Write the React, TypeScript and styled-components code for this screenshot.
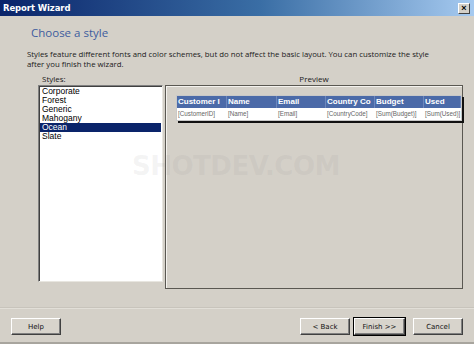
import styled, { createGlobalStyle } from 'styled-components';

const GlobalStyle = createGlobalStyle`
  html, body {
    margin: 0;
    padding: 0;
    background: #d4d0c8;
  }
  * { box-sizing: border-box; }
`;

const styles = ['Corporate', 'Forest', 'Generic', 'Mahogany', 'Ocean', 'Slate'];
const columns = [
  { head: 'Customer I', field: '[CustomerID]' },
  { head: 'Name', field: '[Name]' },
  { head: 'Email', field: '[Email]' },
  { head: 'Country Co', field: '[CountryCode]' },
  { head: 'Budget', field: '[Sum(Budget)]' },
  { head: 'Used', field: '[Sum(Used)]' },
];

const Window = styled.div`
  position: relative;
  width: 474px;
  height: 344px;
  background: #d4d0c8;
  display: flex;
  flex-direction: column;
  font-family: 'Liberation Sans', 'DejaVu Sans', sans-serif;
  overflow: hidden;
  border-bottom: 2px solid #a8a59e;
`;

const TitleBar = styled.div`
  height: 16px;
  display: flex;
  align-items: center;
  justify-content: space-between;
  padding: 0 4px 0 3px;
  background: linear-gradient(90deg, #0a246a 0%, #3a6ea5 55%, #a6caf0 100%);
`;

const TitleText = styled.span`
  color: #fff;
  font-family: 'DejaVu Sans', sans-serif;
  font-weight: bold;
  font-size: 8.5px;
  letter-spacing: -0.1px;
`;

const CloseButton = styled.div`
  width: 12px;
  height: 11px;
  background: #d4d0c8;
  border: 1px solid;
  border-color: #fff #404040 #404040 #fff;
  display: flex;
  align-items: center;
  justify-content: center;
  font-size: 9px;
  font-weight: bold;
  line-height: 1;
  color: #000;
`;

const Heading = styled.h1`
  margin: 10px 0 0 31px;
  font-family: 'Open Sans', 'Liberation Sans', sans-serif;
  font-weight: normal;
  font-size: 11.5px;
  color: #3d5c9e;
  line-height: 14px;
`;

const Description = styled.p`
  margin: 9px 30px 0 27px;
  font-family: 'Open Sans', 'Liberation Sans', sans-serif;
  font-size: 7.8px;
  line-height: 10px;
  color: #1a1a1a;
`;

const Main = styled.div`
  display: flex;
  gap: 2px;
  margin: 5px 0 0 38px;
`;

const Column = styled.div<{ $width: number }>`
  width: ${p => p.$width}px;
  display: flex;
  flex-direction: column;
`;

const Label = styled.div<{ $center?: boolean }>`
  font-family: 'Open Sans', 'Liberation Sans', sans-serif;
  font-size: 8px;
  line-height: 10px;
  height: 10px;
  color: #1a1a1a;
  padding-left: ${p => (p.$center ? 0 : 4)}px;
  text-align: ${p => (p.$center ? 'center' : 'left')};
`;

const ListBox = styled.div`
  margin-top: 1px;
  height: 197px;
  background: #fff;
  border: 1px solid;
  border-color: #808080 #e8e6e0 #e8e6e0 #808080;
  box-shadow: inset 1px 1px 0 #404040;
  padding: 1px 1px;
`;

const ListItem = styled.div<{ $selected?: boolean }>`
  height: 9px;
  line-height: 9px;
  font-size: 8.5px;
  padding-left: 2px;
  color: ${p => (p.$selected ? '#fff' : '#000')};
  background: ${p => (p.$selected ? '#0a246a' : 'transparent')};
`;

const PreviewFrame = styled.div`
  margin-top: 1px;
  height: 204px;
  border: 1px solid #5a5852;
  box-shadow: inset 1px 1px 0 #f4f2ee;
  padding: 9px 2px 0 10px;
`;

const Table = styled.div`
  display: grid;
  grid-template-columns: 50px 50px 49px 49px 49px 37px;
  width: 286px;
  border: 1px solid #c8c8c8;
  box-shadow: 2px 2px 0 #111;
  background: #fff;
`;

const HeadCell = styled.div`
  background: #4b6aa8;
  color: #fff;
  font-weight: bold;
  font-size: 8px;
  height: 12px;
  line-height: 12px;
  padding-left: 1px;
  white-space: nowrap;
  overflow: hidden;
  border-right: 1px solid #6d88bd;
`;

const DataCell = styled.div`
  color: #666;
  font-size: 6.3px;
  height: 12px;
  line-height: 12px;
  padding-left: 1px;
  white-space: nowrap;
`;

const Separator = styled.div`
  margin: 18px 0 0 0;
  height: 2px;
  border-top: 1px solid #c8c4bc;
  border-bottom: 1px solid #e2dfd8;
`;

const ButtonRow = styled.div`
  display: flex;
  align-items: center;
  padding: 9px 11px 0 11px;
`;

const Button = styled.div<{ $default?: boolean; $gap?: number }>`
  width: ${p => (p.$default ? 51 : 50)}px;
  height: 17px;
  margin-left: ${p => p.$gap ?? 0}px;
  display: flex;
  align-items: center;
  justify-content: center;
  font-family: 'DejaVu Sans', sans-serif;
  font-size: 7px;
  color: #111;
  background: #d8d4cc;
  border: 1px solid;
  border-color: #fff #404040 #404040 #fff;
  box-shadow: ${p => (p.$default ? '0 0 0 1px #000, inset -1px -1px 0 #808080' : 'inset -1px -1px 0 #808080')};
`;

const Spacer = styled.div`
  flex: 1;
`;

const Watermark = styled.div`
  position: absolute;
  left: 132px;
  top: 151px;
  font-family: 'DejaVu Sans', sans-serif;
  font-weight: 900;
  font-size: 26px;
  letter-spacing: -0.5px;
  color: rgba(140, 140, 140, 0.1);
  pointer-events: none;
`;

export default function App() {
  return (
    <Window>
      <GlobalStyle />
      <TitleBar>
        <TitleText>Report Wizard</TitleText>
        <CloseButton>×</CloseButton>
      </TitleBar>
      <Heading>Choose a style</Heading>
      <Description>
        Styles feature different fonts and color schemes, but do not affect the basic layout. You can customize the style
        after you finish the wizard.
      </Description>
      <Main>
        <Column $width={125}>
          <Label>Styles:</Label>
          <ListBox>
            {styles.map(s => (
              <ListItem key={s} $selected={s === 'Ocean'}>
                {s}
              </ListItem>
            ))}
          </ListBox>
        </Column>
        <Column $width={298}>
          <Label $center>Preview</Label>
          <PreviewFrame>
            <Table>
              {columns.map(c => (
                <HeadCell key={c.head}>{c.head}</HeadCell>
              ))}
              {columns.map(c => (
                <DataCell key={c.field}>{c.field}</DataCell>
              ))}
            </Table>
          </PreviewFrame>
        </Column>
      </Main>
      <Separator />
      <ButtonRow>
        <Button>Help</Button>
        <Spacer />
        <Button>&lt; Back</Button>
        <Button $default $gap={4}>
          Finish &gt;&gt;
        </Button>
        <Button $gap={8}>Cancel</Button>
      </ButtonRow>
      <Watermark>SHOTDEV.COM</Watermark>
    </Window>
  );
}
